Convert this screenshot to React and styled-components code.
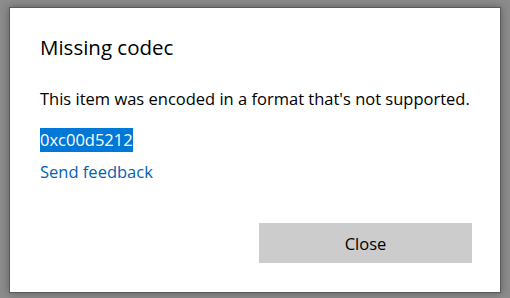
import React from "react";
import styled, { createGlobalStyle } from "styled-components";

const GlobalStyle = createGlobalStyle`
  html, body {
    margin: 0;
    padding: 0;
    background: #8c8c8c;
    font-family: "Open Sans", "Noto Sans", sans-serif;
  }
`;

const Backdrop = styled.div`
  width: 510px;
  height: 298px;
  padding: 7px 9px 5px 9px;
  box-sizing: border-box;
`;

const Dialog = styled.div`
  height: 100%;
  box-sizing: border-box;
  background: #ffffff;
  border: 1px solid #5a5a5a;
  box-shadow: 0 0 8px rgba(0, 0, 0, 0.35);
  padding: 25px 28px 29px 30px;
  display: flex;
  flex-direction: column;
`;

const Title = styled.h1`
  margin: 0;
  font-size: 20.5px;
  font-weight: 400;
  line-height: 28px;
  color: #000000;
`;

const Message = styled.p`
  margin: 27px 0 0 0;
  font-size: 16.5px;
  line-height: 22px;
  color: #000000;
`;

const ErrorCode = styled.span`
  align-self: flex-start;
  margin-top: 18px;
  font-size: 16.5px;
  line-height: 24px;
  color: #ffffff;
  background: #0078d7;
`;

const FeedbackLink = styled.a`
  align-self: flex-start;
  margin-top: 9px;
  font-size: 16.5px;
  line-height: 22px;
  color: #0063b1;
  text-decoration: none;
  cursor: pointer;
`;

const Footer = styled.div`
  margin-top: auto;
  display: flex;
  justify-content: flex-end;
`;

const Button = styled.button`
  width: 213px;
  height: 40px;
  padding: 0;
  border: none;
  background: #cccccc;
  color: #000000;
  font-family: inherit;
  font-size: 16.5px;
`;

export default function App() {
  return (
    <>
      <GlobalStyle />
      <Backdrop>
        <Dialog>
          <Title>Missing codec</Title>
          <Message>This item was encoded in a format that's not supported.</Message>
          <ErrorCode>0xc00d5212</ErrorCode>
          <FeedbackLink>Send feedback</FeedbackLink>
          <Footer>
            <Button>Close</Button>
          </Footer>
        </Dialog>
      </Backdrop>
    </>
  );
}
